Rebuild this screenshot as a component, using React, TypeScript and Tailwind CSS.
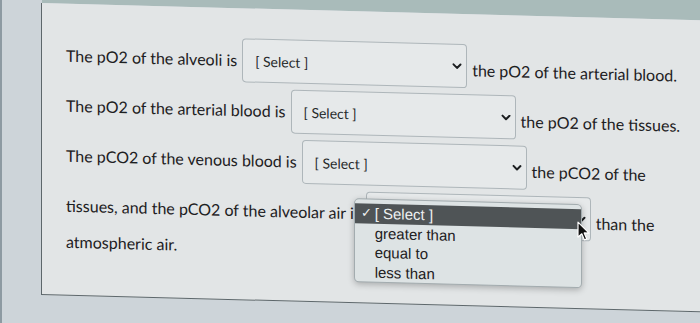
import type { ReactNode } from "react";

const options = ["greater than", "equal to", "less than"];

function Chevron() {
  return (
    <svg width="10" height="7" viewBox="0 0 10 7" className="shrink-0">
      <path d="M1.5 1.5L5 5l3.5-3.5" fill="none" stroke="#1b1e20" strokeWidth={2} strokeLinecap="round" strokeLinejoin="round" />
    </svg>
  );
}

function SelectBox({ children }: { children?: ReactNode }) {
  return (
    <div className="relative flex h-[44px] w-[225px] shrink-0 items-center justify-between rounded-[4px] border border-[#aeb6ba] bg-[#e6e9ea] pl-[12px] pr-[4px]">
      <span className="text-[14px] text-[#26292b]">[ Select ]</span>
      <Chevron />
      {children}
    </div>
  );
}

function Cursor() {
  return (
    <svg width="13" height="20" viewBox="0 0 13 20" className="absolute left-[210px] top-[23px] z-20">
      <path d="M1 1L1 16L4.8 12.6L7.4 18.6L9.8 17.6L7.2 11.7L12 11.7Z" fill="#111" stroke="#fff" strokeWidth={1.2} strokeLinejoin="round" />
    </svg>
  );
}

function OpenList() {
  return (
    <div className="absolute left-[-13px] top-[6px] z-10 h-[84px] w-[228px] rounded-[5px] border border-[#a3acaf] bg-[#dde3e4] pt-[4px] font-['Liberation_Sans',Arial,sans-serif] text-[15px] shadow-[0_2px_6px_rgba(0,0,0,0.25)]">
      <div className="flex h-[20px] items-center bg-[#4f5456] pl-[6px] text-[#eef1f1]">
        <span className="w-[14px] text-[13px]">✓</span>
        <span>[ Select ]</span>
      </div>
      {options.map((o) => (
        <div key={o} className="flex h-[19.5px] items-center pl-[20px] text-[#1d2022]">
          {o}
        </div>
      ))}
    </div>
  );
}

function Row({ pre, post, children }: { pre: string; post: string; children?: ReactNode }) {
  return (
    <div className="flex h-[44px] items-center gap-[5px] whitespace-nowrap">
      <span>{pre}</span>
      <SelectBox>{children}</SelectBox>
      <span className="mt-[8px]">{post}</span>
    </div>
  );
}

export default function App() {
  return (
    <div className="relative h-[323px] w-[700px] overflow-hidden border-l-2 border-[#8d9aa2] bg-[#cdd4d9] font-['Lato','Open_Sans',sans-serif] text-[16px] text-[#1d2022]">
      <div className="-mt-[20px] origin-top-left skew-y-[1.5deg]">
        {/* top strip above the quiz panel */}
        <div className="ml-[40px] h-[22px] bg-[#a9bbba]" />

        {/* quiz panel */}
        <div className="ml-[39px] flex h-[292px] w-[700px] flex-col gap-[6px] border-b border-l border-[#5d676b] bg-[#e2e5e6] pl-[24px] pt-[30px]">
          <Row pre="The pO2 of the alveoli is" post="the pO2 of the arterial blood." />
          <Row pre="The pO2 of the arterial blood is" post="the pO2 of the tissues." />
          <Row pre="The pCO2 of the venous blood is" post="the pCO2 of the" />
          <Row pre="tissues, and the pCO2 of the alveolar air is" post="than the">
            <OpenList />
            <Cursor />
          </Row>
          <div className="-mt-[4px] leading-[24px]">atmospheric air.</div>
        </div>
      </div>
    </div>
  );
}
